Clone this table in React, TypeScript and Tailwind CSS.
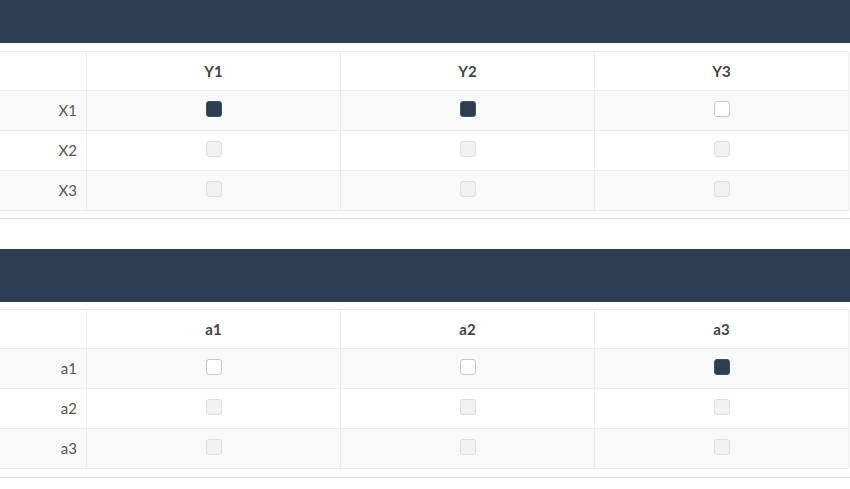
type Cell = 'on' | 'off' | 'disabled'

interface MatrixProps {
  cols: string[]
  rows: { label: string; cells: Cell[] }[]
}

function Check({ state }: { state: Cell }) {
  if (state === 'on') {
    return <span className="block w-4 h-4 rounded-[3px] bg-[#2c3e50] border border-[#3d4f63]" />
  }
  if (state === 'off') {
    return <span className="block w-4 h-4 rounded-[3px] bg-white border border-[#c8c8c8]" />
  }
  return <span className="block w-4 h-4 rounded-[3px] bg-[#f2f2f2] border border-[#dedede]" />
}

function Matrix({ cols, rows }: MatrixProps) {
  return (
    <div className="w-[849px] border-t border-r border-[#ebebeb] text-[15px]">
      <div className="grid grid-cols-[87px_254px_254px_1fr] h-[39px] border-b border-[#ebebeb] bg-white">
        <div className="border-r border-[#ebebeb]" />
        {cols.map((c, i) => (
          <div
            key={c}
            className={`flex items-center justify-center font-bold text-[#444] ${i < cols.length - 1 ? 'border-r border-[#ebebeb]' : ''}`}
          >
            {c}
          </div>
        ))}
      </div>
      {rows.map((row, r) => (
        <div
          key={row.label}
          className={`grid grid-cols-[87px_254px_254px_1fr] h-[40px] border-b border-[#ebebeb] ${r % 2 === 0 ? 'bg-[#f9f9f9]' : 'bg-white'}`}
        >
          <div className="flex items-center justify-end pr-[9px] text-[#555] border-r border-[#ebebeb]">{row.label}</div>
          {row.cells.map((cell, i) => (
            <div
              key={i}
              className={`flex items-center justify-center pb-1 ${i < row.cells.length - 1 ? 'border-r border-[#ebebeb]' : ''}`}
            >
              <Check state={cell} />
            </div>
          ))}
        </div>
      ))}
    </div>
  )
}

export default function App() {
  return (
    <div className="w-[850px] h-[489px] overflow-hidden bg-white" style={{ fontFamily: 'Lato, "Open Sans", sans-serif' }}>
      <div className="h-[43px] bg-[#2c3e50]" />
      <div className="mt-2">
        <Matrix
          cols={['Y1', 'Y2', 'Y3']}
          rows={[
            { label: 'X1', cells: ['on', 'on', 'off'] },
            { label: 'X2', cells: ['disabled', 'disabled', 'disabled'] },
            { label: 'X3', cells: ['disabled', 'disabled', 'disabled'] },
          ]}
        />
      </div>
      <div className="mt-[7px] border-t border-[#dcdcdc]" />

      <div className="mt-[30px] h-[53px] bg-[#2c3e50]" />
      <div className="mt-[7px]">
        <Matrix
          cols={['a1', 'a2', 'a3']}
          rows={[
            { label: 'a1', cells: ['off', 'off', 'on'] },
            { label: 'a2', cells: ['disabled', 'disabled', 'disabled'] },
            { label: 'a3', cells: ['disabled', 'disabled', 'disabled'] },
          ]}
        />
      </div>
      <div className="mt-[8px] border-t border-[#dcdcdc]" />
    </div>
  )
}
